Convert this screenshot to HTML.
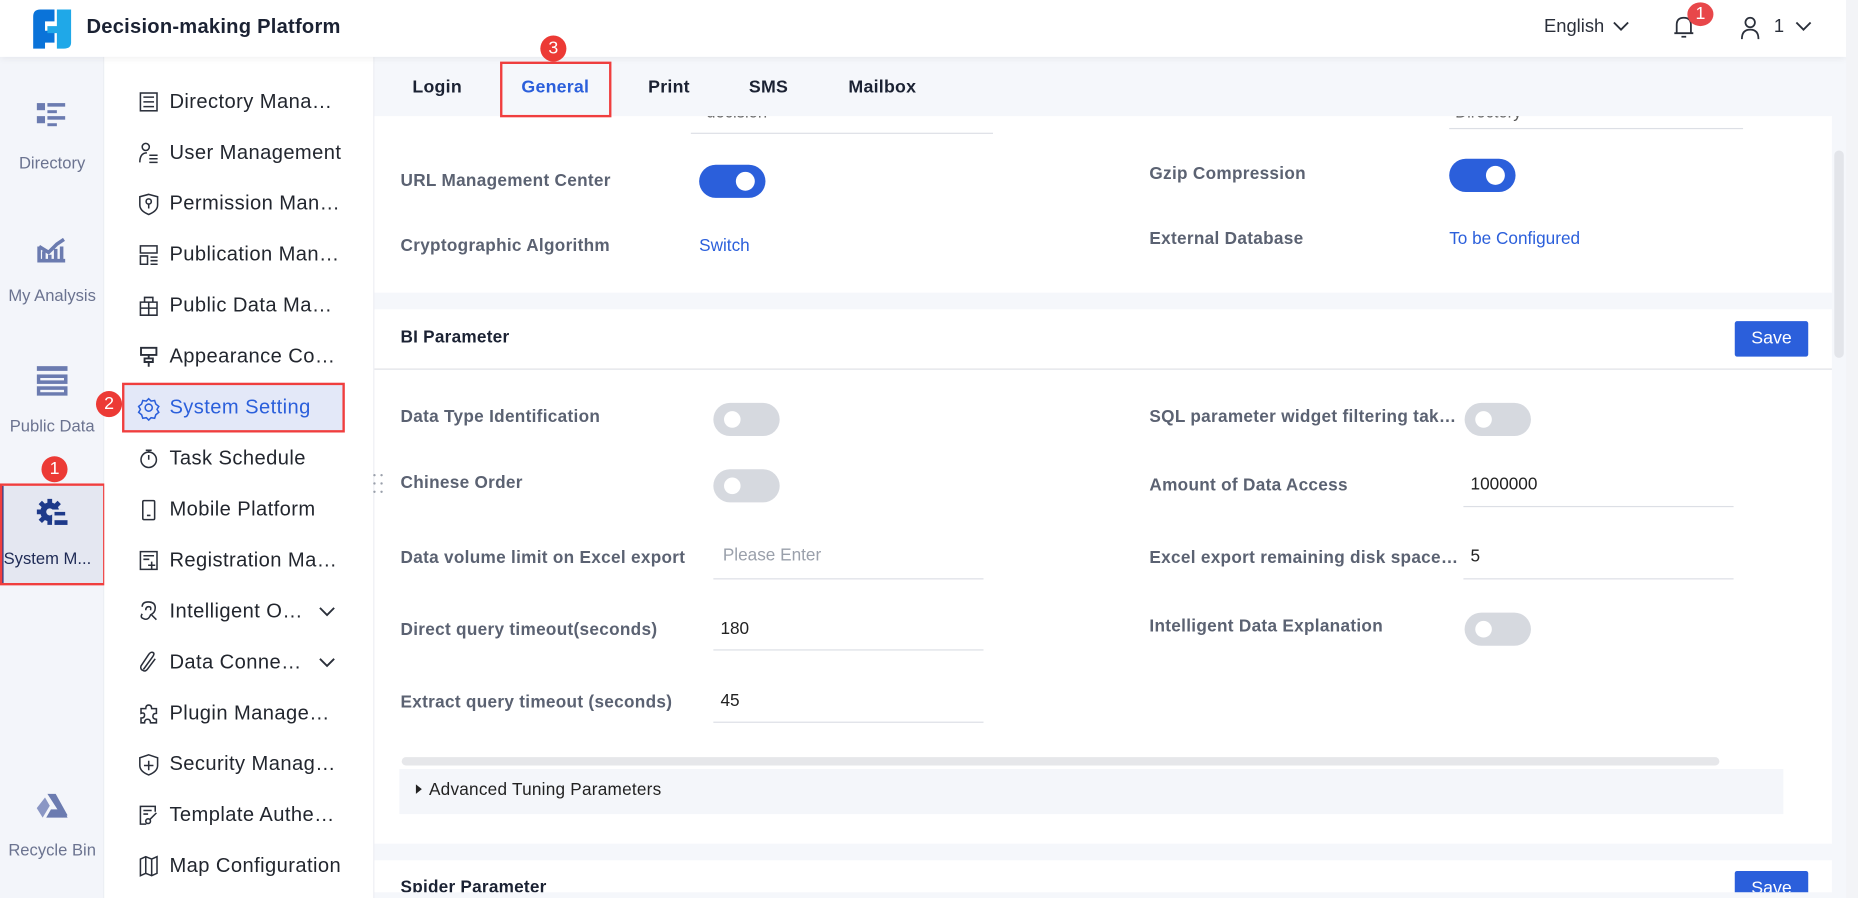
<!DOCTYPE html>
<html><head><meta charset="utf-8"><style>
*{margin:0;padding:0;box-sizing:border-box}
html,body{width:1858px;height:898px;overflow:hidden;background:#f5f6fa}
#w{position:absolute;left:0;top:0;width:1568px;height:758px;transform:scale(1.18495);transform-origin:0 0;font-family:"Liberation Sans",Arial,sans-serif;background:#f5f7fb;overflow:hidden}
.a{position:absolute}
.t{position:absolute;line-height:20px;height:20px;white-space:nowrap}
.lab{font-size:14.5px;font-weight:bold;color:#5b6272;letter-spacing:0.25px}
.menu{font-size:17px;color:#22262e;letter-spacing:0.35px}
.rail{font-size:14px;color:#6b7390;width:88px;text-align:center;left:0}
.tog{position:absolute;width:56px;height:28px;border-radius:14px;background:#d6d9df}
.tog::after{content:"";position:absolute;left:9px;top:7px;width:14px;height:14px;border-radius:50%;background:#fff}
.tog.on{background:#2b5fdb}
.tog.on::after{left:auto;right:9px;width:16px;height:16px;top:6px}
.ul{position:absolute;height:1px;background:#dcdfe5}
.badge{position:absolute;width:22px;height:22px;border-radius:50%;background:#ec3a35;color:#fff;font-size:15px;text-align:center;line-height:22px}
.rb{position:absolute;border:2px solid #f03e3e}
.btn{position:absolute;background:#2b5fdb;color:#fff;font-size:15px;text-align:center;line-height:30px;border-radius:2px;width:62px;height:30px}
.tab{font-size:15px;font-weight:bold;color:#1b2233;letter-spacing:0.2px}
</style></head><body><div id="w">
<!-- header -->
<div class="a" style="left:0;top:0;width:1558px;height:48px;background:#fff;box-shadow:0 2px 6px rgba(0,0,0,.06);z-index:3"></div>
<div class="a" style="left:1558px;top:0;width:10px;height:758px;background:#f3f4f7;z-index:4"></div>
<svg class="a" style="left:26px;top:6px;z-index:5" width="36" height="36" viewBox="0 0 36 36"><path d="M2 8Q2 2 8 2H20V12H12V20H20V30H12V35H2Z" fill="#0a73d9"/><path d="M22 2H34V30Q34 35 28 35H22V22H14V16H22Z" fill="#1fa8e8"/></svg>
<div class="t" style="left:73px;top:13px;font-size:17px;font-weight:bold;color:#1b2233;z-index:5;letter-spacing:0.2px">Decision-making Platform</div>
<div class="t" style="left:1303px;top:13px;font-size:15.5px;color:#2a2f3a;z-index:5">English</div>
<svg class="a" style="left:1360px;top:16px;z-index:5" width="16" height="12"><path d="M2 3L8 9L14 3" stroke="#2a2f3a" stroke-width="1.6" fill="none"/></svg>
<svg class="a" style="left:1411px;top:12px;z-index:5" width="20" height="22"><path d="M4 16V9Q4 3 10 3Q16 3 16 9V16ZM2 16H18M8 19H12" stroke="#2a2f3a" stroke-width="1.5" fill="none"/></svg>
<div class="badge" style="left:1424px;top:2px;width:22px;height:20px;line-height:20px;background:#e8474a;z-index:6">1</div>
<svg class="a" style="left:1467px;top:13px;z-index:5" width="20" height="22"><circle cx="10" cy="6" r="4" stroke="#2a2f3a" stroke-width="1.5" fill="none"/><path d="M3 20Q3 12 10 12Q17 12 17 20" stroke="#2a2f3a" stroke-width="1.5" fill="none"/></svg>
<div class="t" style="left:1497px;top:13px;font-size:15.5px;color:#2a2f3a;z-index:5">1</div>
<svg class="a" style="left:1514px;top:16px;z-index:5" width="16" height="12"><path d="M2 3L8 9L14 3" stroke="#2a2f3a" stroke-width="1.6" fill="none"/></svg>

<!-- left rail -->
<div class="a" style="left:0;top:48px;width:88px;height:710px;background:#f3f5fa;border-right:1px solid #eceef3"></div>
<svg class="a" style="left:31px;top:86px" width="26" height="26"><rect x="0" y="1" width="7" height="6" fill="#6b7bb0"/><rect x="9" y="1" width="15" height="3" fill="#6b7bb0"/><rect x="9" y="7" width="8" height="2.5" fill="#6b7bb0"/><rect x="0" y="12" width="7" height="6" fill="#6b7bb0"/><rect x="9" y="12" width="15" height="3" fill="#6b7bb0"/><rect x="9" y="18" width="8" height="2.5" fill="#6b7bb0"/></svg>
<div class="t rail" style="top:127px">Directory</div>
<svg class="a" style="left:31px;top:198px" width="26" height="26"><path d="M2 10V22H24M6 22V14M11 22V17M16 22V12M21 22V10M2 10L10 15L17 8L23 4" stroke="#6b7bb0" stroke-width="3" fill="none"/></svg>
<div class="t rail" style="top:239px">My Analysis</div>
<svg class="a" style="left:31px;top:308px" width="26" height="26"><rect x="0" y="1" width="26" height="4" fill="#6b7bb0"/><rect x="0" y="8" width="26" height="8" fill="#6b7bb0"/><rect x="3" y="11" width="20" height="2" fill="#f3f5fa"/><rect x="0" y="18" width="26" height="8" fill="#6b7bb0"/><rect x="3" y="21" width="20" height="2" fill="#f3f5fa"/></svg>
<div class="t rail" style="top:349px">Public Data</div>
<div class="a" style="left:0;top:410px;width:88px;height:82px;background:#e4e7f1;border-left:3px solid #1e3a8a"></div>
<svg class="a" style="left:31px;top:420px" width="26" height="26"><circle cx="11" cy="12" r="8" fill="#1e3a8a"/><path d="M11 1V23M0 12H22M3 4L19 20M19 4L3 20" stroke="#1e3a8a" stroke-width="4"/><circle cx="11" cy="12" r="3" fill="#e4e7f1"/><rect x="13" y="10" width="13" height="14" fill="#e4e7f1"/><rect x="15" y="12" width="9" height="3" fill="#1e3a8a"/><rect x="15" y="19" width="11" height="4" fill="#1e3a8a"/></svg>
<div class="t rail" style="top:461px;color:#1e2a55;left:-4px">System M...</div>
<div class="rb" style="left:0;top:408px;width:89px;height:86px"></div>
<div class="badge" style="left:35px;top:385px">1</div>
<svg class="a" style="left:30px;top:668px" width="28" height="24"><path d="M10 2H17L27 20L23 22Z" fill="#6b7bb0"/><path d="M8 5L12 12L6 22L1 14Z" fill="#8a96c4"/><path d="M9 22L13 15H24L27 22Z" fill="#6b7bb0"/></svg>
<div class="t rail" style="top:707px">Recycle Bin</div>

<!-- menu -->
<div class="a" style="left:88px;top:48px;width:228px;height:710px;background:#fff;border-right:1px solid #eceef3"></div>
<div class="a" style="left:103px;top:323px;width:187px;height:41px;background:#e3e8f8"></div>
<svg class="a" style="left:110px;top:70px" width="30" height="680" fill="none" stroke="#2a2f3a" stroke-width="1.3">
<rect x="8.5" y="8.5" width="14" height="15"/><path d="M11 12h9M11 16h9M11 20h9"/>
<g transform="translate(0,43)"><circle cx="13" cy="11" r="3"/><path d="M8 24Q8 16 14 16M16 18h7M16 21h7M16 24h7"/></g>
<g transform="translate(0,86)"><path d="M15.5 8L23 10V17Q23 22 15.5 25Q8 22 8 17V10Z"/><circle cx="15.5" cy="14" r="2.2"/><path d="M15.5 16V20"/></g>
<g transform="translate(0,129)"><path d="M8.5 8.5h14v6h-14zM8.5 17h6v7h-6zM17 18h6M17 21h6M17 24h6"/></g>
<g transform="translate(0,172)"><path d="M8.5 13h14v11h-14zM12 13V9h7v4M8.5 18h14M15.5 13v11"/></g>
<g transform="translate(0,215)"><path d="M9 8.5h13v6H9zM15.5 14.5v3M12 17.5h7v3h-7zM15.5 20.5v4" stroke-width="1.6"/></g>
<g transform="translate(0,258)" stroke="#2b5fdb"><circle cx="15.5" cy="16" r="3"/><path d="M15.5 8.5l2 2 3-.5 1 3 2.5 2-1.5 2.5 1.5 2.5-2.5 2-1 3-3-.5-2 2-2-2-3 .5-1-3-2.5-2 1.5-2.5-1.5-2.5 2.5-2 1-3 3 .5z"/></g>
<g transform="translate(0,301)"><circle cx="15.5" cy="17" r="6.5"/><path d="M15.5 13v4M13 9h5M15.5 9v1.5"/></g>
<g transform="translate(0,344)"><rect x="10.5" y="8.5" width="10" height="16" rx="1"/><path d="M14 21h3"/></g>
<g transform="translate(0,387)"><path d="M8.5 8.5h14v15h-14zM11 12h9M11 15h5M15 20h6M18 17v6"/></g>
<g transform="translate(0,430)"><path d="M10 12Q10 8 15 8Q21 8 21 13Q21 17 17 19Q15 24 11 22Q8 21 10 18M13 15Q13 12 15.5 12Q18 12 17 15M18 19l4 4"/></g>
<g transform="translate(0,473)"><path d="M11 22L19 11Q21 8 18.5 7.5Q17 7 15 10L9 19Q8 22 11 23Q13 24 15 21L21 13"/></g>
<g transform="translate(0,516)"><path d="M9 12h4q0-3 2.5-3t2.5 3h4v4q-3 0-3 2.5t3 2.5v3h-5q0-3-2.5-3t-2.5 3H9v-4q3 0 3-2.5T9 16z"/></g>
<g transform="translate(0,559)"><path d="M15.5 8L23 10.5V17Q23 22 15.5 25Q8 22 8 17V10.5Z"/><path d="M15.5 13v8M11.5 17h8"/></g>
<g transform="translate(0,602)"><path d="M21 13V8.5H8.5v15h5M11 12h7M11 15h4"/><circle cx="15" cy="21" r="2"/><path d="M16.5 19.5L22 14"/></g>
<g transform="translate(0,645)"><path d="M8.5 10l4.5-2 5 2 4.5-2v14l-4.5 2-5-2-4.5 2zM13 8v14M18 10v14"/></g>
</svg>
<div class="t menu" style="left:143px;top:76px">Directory Mana…</div>
<div class="t menu" style="left:143px;top:119px">User Management</div>
<div class="t menu" style="left:143px;top:162px">Permission Man…</div>
<div class="t menu" style="left:143px;top:205px">Publication Man…</div>
<div class="t menu" style="left:143px;top:248px">Public Data Ma…</div>
<div class="t menu" style="left:143px;top:291px">Appearance Co…</div>
<div class="t menu" style="left:143px;top:334px;color:#2b5fdb">System Setting</div>
<div class="t menu" style="left:143px;top:377px">Task Schedule</div>
<div class="t menu" style="left:143px;top:420px">Mobile Platform</div>
<div class="t menu" style="left:143px;top:463px">Registration Ma…</div>
<div class="t menu" style="left:143px;top:506px">Intelligent O…</div>
<div class="t menu" style="left:143px;top:549px">Data Conne…</div>
<div class="t menu" style="left:143px;top:592px">Plugin Manage…</div>
<div class="t menu" style="left:143px;top:635px">Security Manag…</div>
<div class="t menu" style="left:143px;top:678px">Template Authe…</div>
<div class="t menu" style="left:143px;top:721px">Map Configuration</div>
<svg class="a" style="left:268px;top:510px" width="16" height="56" fill="none" stroke="#2a2f3a" stroke-width="1.6"><path d="M2 3l6 6 6-6M2 46l6 6 6-6"/></svg>
<div class="rb" style="left:103px;top:323px;width:188px;height:42px"></div>
<div class="badge" style="left:81px;top:330px">2</div>

<!-- tabs -->
<div class="t tab" style="left:348px;top:64px">Login</div>
<div class="t tab" style="left:440px;top:64px;color:#2b5fdb">General</div>
<div class="t tab" style="left:547px;top:64px">Print</div>
<div class="t tab" style="left:632px;top:64px">SMS</div>
<div class="t tab" style="left:716px;top:64px">Mailbox</div>

<!-- card 1 -->
<div class="a" style="left:316px;top:98px;width:1230px;height:149px;background:#fff;overflow:hidden">
 <div class="t lab" style="left:22px;top:-14px">Servlet Path Name</div>
 <div class="t" style="left:280px;top:-14px;font-size:14px;color:#555">decision</div>
 <div class="t" style="left:912px;top:-14px;font-size:14px;color:#555">Directory</div>
</div>
<div class="ul" style="left:583px;top:112px;width:255px"></div>
<div class="ul" style="left:1223px;top:108px;width:248px"></div>
<div class="t lab" style="left:338px;top:143px">URL Management Center</div>
<div class="tog on" style="left:590px;top:139px"></div>
<div class="t lab" style="left:970px;top:137px">Gzip Compression</div>
<div class="tog on" style="left:1223px;top:134px"></div>
<div class="t lab" style="left:338px;top:198px">Cryptographic Algorithm</div>
<div class="t" style="left:590px;top:198px;font-size:14.5px;color:#2b5fdb">Switch</div>
<div class="t lab" style="left:970px;top:192px">External Database</div>
<div class="t" style="left:1223px;top:192px;font-size:14.5px;color:#2b5fdb">To be Configured</div>

<!-- BI card -->
<div class="a" style="left:316px;top:261px;width:1230px;height:451px;background:#fff"></div>
<div class="t" style="left:338px;top:275px;font-size:14.5px;font-weight:bold;color:#1b2233;letter-spacing:0.2px">BI Parameter</div>
<div class="btn" style="left:1464px;top:271px">Save</div>
<div class="a" style="left:316px;top:311px;width:1230px;height:1px;background:#dfe1e6"></div>
<div class="t lab" style="left:338px;top:342px">Data Type Identification</div>
<div class="tog" style="left:602px;top:340px"></div>
<div class="t lab" style="left:970px;top:342px">SQL parameter widget filtering tak…</div>
<div class="tog" style="left:1236px;top:340px"></div>
<svg class="a" style="left:314px;top:398px" width="10" height="20" fill="#9aa0ab"><circle cx="2" cy="3" r="1"/><circle cx="8" cy="3" r="1"/><circle cx="2" cy="10" r="1"/><circle cx="8" cy="10" r="1"/><circle cx="2" cy="17" r="1"/><circle cx="8" cy="17" r="1"/></svg>
<div class="t lab" style="left:338px;top:398px">Chinese Order</div>
<div class="tog" style="left:602px;top:396px"></div>
<div class="t lab" style="left:970px;top:400px">Amount of Data Access</div>
<div class="t" style="left:1241px;top:399px;font-size:14.5px;color:#222">1000000</div>
<div class="ul" style="left:1235px;top:427px;width:228px"></div>
<div class="t lab" style="left:338px;top:461px">Data volume limit on Excel export</div>
<div class="t" style="left:610px;top:459px;font-size:14.5px;color:#9aa0ab">Please Enter</div>
<div class="ul" style="left:602px;top:488px;width:228px"></div>
<div class="t lab" style="left:970px;top:461px">Excel export remaining disk space…</div>
<div class="t" style="left:1241px;top:460px;font-size:14.5px;color:#222">5</div>
<div class="ul" style="left:1235px;top:488px;width:228px"></div>
<div class="t lab" style="left:338px;top:522px">Direct query timeout(seconds)</div>
<div class="t" style="left:608px;top:521px;font-size:14.5px;color:#222">180</div>
<div class="ul" style="left:602px;top:548px;width:228px"></div>
<div class="t lab" style="left:970px;top:519px">Intelligent Data Explanation</div>
<div class="tog" style="left:1236px;top:517px"></div>
<div class="t lab" style="left:338px;top:583px">Extract query timeout (seconds)</div>
<div class="t" style="left:608px;top:582px;font-size:14.5px;color:#222">45</div>
<div class="ul" style="left:602px;top:609px;width:228px"></div>
<div class="a" style="left:339px;top:639px;width:1112px;height:7px;border-radius:4px;background:#e6e7ea"></div>
<div class="a" style="left:337px;top:649px;width:1168px;height:38px;background:#f4f6fa"></div>
<div class="a" style="left:351px;top:662px;width:0;height:0;border-left:5px solid #222;border-top:4.5px solid transparent;border-bottom:4.5px solid transparent"></div>
<div class="t" style="left:362px;top:657px;font-size:14.5px;color:#222;letter-spacing:0.2px">Advanced Tuning Parameters</div>

<!-- spider card -->
<div class="a" style="left:316px;top:726px;width:1230px;height:27px;background:#fff;overflow:hidden">
 <div class="t" style="left:22px;top:13px;font-size:14.5px;font-weight:bold;color:#1b2233;letter-spacing:0.2px">Spider Parameter</div>
 <div class="btn" style="left:1148px;top:9px">Save</div>
</div>

<!-- scrollbar -->
<div class="a" style="left:1548px;top:127px;width:8px;height:175px;border-radius:4px;background:#e3e5ea"></div>

<div class="rb" style="left:422px;top:52px;width:94px;height:47px"></div>
<div class="badge" style="left:456px;top:30px;z-index:6">3</div>
</div></body></html>
